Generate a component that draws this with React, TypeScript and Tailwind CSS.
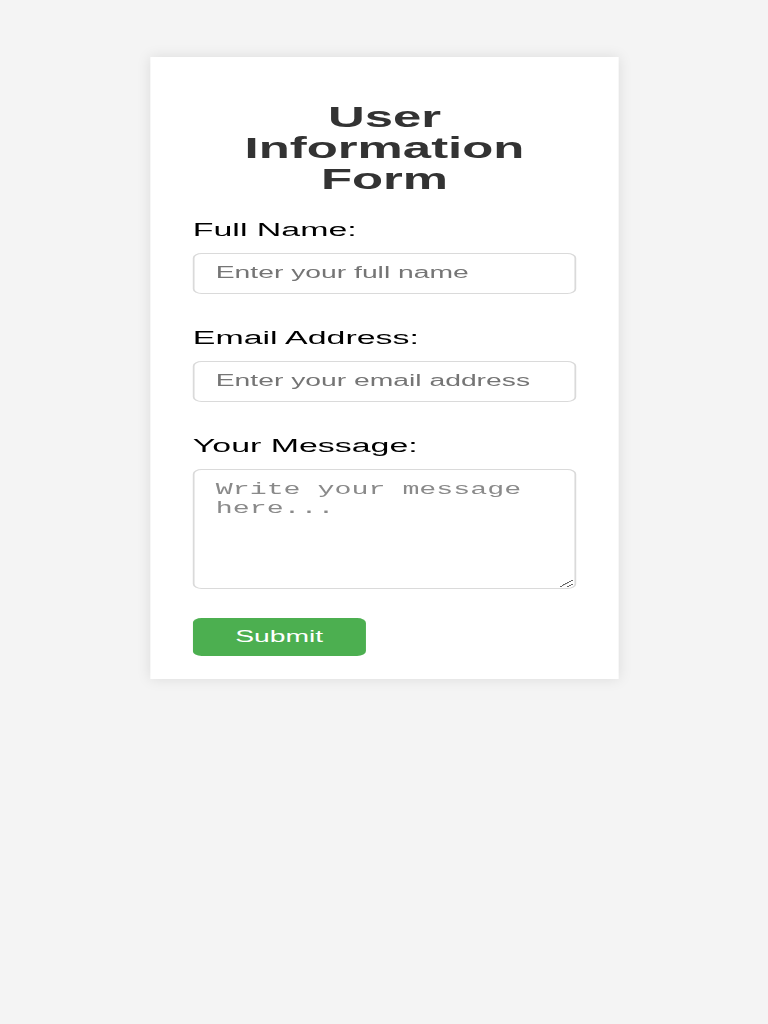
import { FormEvent, useState } from 'react';

// The reference is a stretched capture: content is laid out narrow and the
// card is widened horizontally as a whole.
function App() {
  const [name, setName] = useState('');
  const [email, setEmail] = useState('');
  const [message, setMessage] = useState('');

  const onSubmit = (e: FormEvent<HTMLFormElement>) => {
    e.preventDefault();
  };

  return (
    <div className="min-h-screen bg-[#f4f4f4] pt-[57px] font-['Liberation_Sans',Arial,sans-serif]">
      <div className="mx-auto w-[265px] scale-x-[1.767] bg-white px-[24px] pt-[25px] pb-[23px] shadow-[0_0_10px_rgba(0,0,0,0.1)]">
        <h1 className="mt-[19.5px] mb-[23.5px] text-center text-[28.8px] leading-[31.3px] font-bold text-[#333]">
          User Information Form
        </h1>

        <form onSubmit={onSubmit}>
          <label
            htmlFor="full-name"
            className="block text-[19.2px] leading-[22px] text-black"
          >
            Full Name:
          </label>
          <input
            id="full-name"
            type="text"
            value={name}
            onChange={e => setName(e.target.value)}
            placeholder="Enter your full name"
            className="mt-[12px] block h-[41px] w-full rounded-[5px] border border-[#dadada] px-[12px] text-[16px] placeholder:text-[#757575] focus:outline-none"
          />

          <label
            htmlFor="email"
            className="mt-[33px] block text-[19.2px] leading-[22px] text-black"
          >
            Email Address:
          </label>
          <input
            id="email"
            type="email"
            value={email}
            onChange={e => setEmail(e.target.value)}
            placeholder="Enter your email address"
            className="mt-[12px] block h-[41px] w-full rounded-[5px] border border-[#dadada] px-[12px] text-[16px] placeholder:text-[#757575] focus:outline-none"
          />

          <label
            htmlFor="message"
            className="mt-[33px] block text-[19.2px] leading-[22px] text-black"
          >
            Your Message:
          </label>
          <textarea
            id="message"
            value={message}
            onChange={e => setMessage(e.target.value)}
            placeholder="Write your message here..."
            className="mt-[12px] block h-[120px] w-full rounded-[5px] border border-[#dadada] px-[12px] pt-[11px] font-['Liberation_Mono',monospace] text-[16px] leading-[19.2px] placeholder:text-[#8a8a8a] focus:outline-none"
          />

          <button
            type="submit"
            className="mt-[29px] rounded-[5px] bg-[#4caf50] px-[24px] py-[10px] text-[16px] leading-[18.4px] text-white"
          >
            Submit
          </button>
        </form>
      </div>
    </div>
  );
}

export default App;
